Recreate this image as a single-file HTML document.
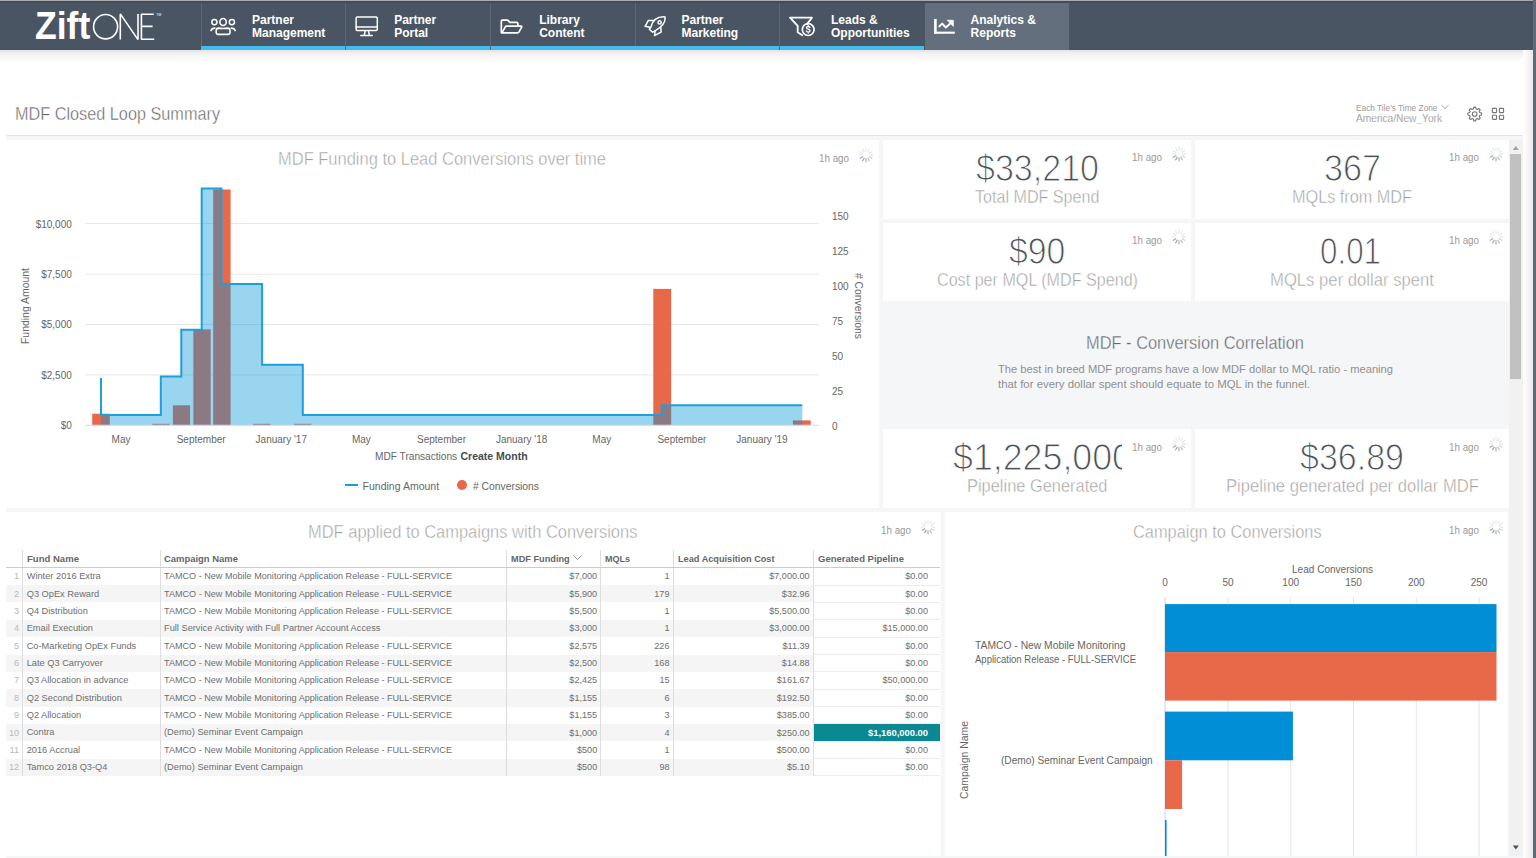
<!DOCTYPE html>
<html><head><meta charset="utf-8"><title>MDF Closed Loop Summary</title>
<style>
html,body{margin:0;padding:0;}
body{width:1536px;height:858px;overflow:hidden;position:relative;background:#fff;font-family:"Liberation Sans",sans-serif;}
.r{position:absolute;}
.t{position:absolute;white-space:nowrap;line-height:1;transform-origin:0 0;}
svg text{font-family:"Liberation Sans",sans-serif;}
</style></head><body>
<div class="r" style="left:0.00px;top:0.00px;width:1536.00px;height:1.00px;background:#abaaae;"></div>
<div class="r" style="left:0.00px;top:1.00px;width:1536.00px;height:49.40px;background:#4a5563;"></div>
<div class="r" style="left:0.00px;top:1.00px;width:1536.00px;height:1.50px;background:#434d59;"></div>
<span class="t" style="left:34.50px;top:7.24px;font-size:38.70px;color:#ffffff;font-weight:bold;transform:scaleX(0.9191);">Zift</span>
<svg class="r" style="left:0;top:0" width="200" height="50" viewBox="0 0 200 50">
<g fill="none" stroke="#fff" stroke-width="1.6" stroke-linejoin="bevel">
<ellipse cx="105.6" cy="26.7" rx="12" ry="12.2"/>
<path d="M120.3 39.6V13.9L138 39.6V13.9"/>
<path d="M153.8 14.2H141.4V39.2H154.2M141.4 26.4H152.6"/>
</g>
<text x="156.5" y="15.5" font-size="3.2" fill="#fff" font-family="Liberation Sans">TM</text>
</svg>
<div class="r" style="left:200.50px;top:3.00px;width:1.00px;height:47.40px;background:#5c6876;"></div>
<div class="r" style="left:201.30px;top:46.20px;width:144.40px;height:4.20px;background:#40bcee;"></div>
<span class="t" style="left:252.00px;top:14.14px;font-size:12.00px;color:#ffffff;font-weight:bold;">Partner</span>
<span class="t" style="left:252.00px;top:27.14px;font-size:12.00px;color:#ffffff;font-weight:bold;">Management</span>
<div class="r" style="left:345.20px;top:3.00px;width:1.00px;height:47.40px;background:#5c6876;"></div>
<div class="r" style="left:346.00px;top:46.20px;width:144.40px;height:4.20px;background:#40bcee;"></div>
<span class="t" style="left:394.20px;top:14.14px;font-size:12.00px;color:#ffffff;font-weight:bold;">Partner</span>
<span class="t" style="left:394.20px;top:27.14px;font-size:12.00px;color:#ffffff;font-weight:bold;">Portal</span>
<div class="r" style="left:489.90px;top:3.00px;width:1.00px;height:47.40px;background:#5c6876;"></div>
<div class="r" style="left:490.70px;top:46.20px;width:144.40px;height:4.20px;background:#40bcee;"></div>
<span class="t" style="left:539.20px;top:14.14px;font-size:12.00px;color:#ffffff;font-weight:bold;">Library</span>
<span class="t" style="left:539.20px;top:27.14px;font-size:12.00px;color:#ffffff;font-weight:bold;">Content</span>
<div class="r" style="left:634.60px;top:3.00px;width:1.00px;height:47.40px;background:#5c6876;"></div>
<div class="r" style="left:635.40px;top:46.20px;width:144.40px;height:4.20px;background:#40bcee;"></div>
<span class="t" style="left:681.50px;top:14.14px;font-size:12.00px;color:#ffffff;font-weight:bold;">Partner</span>
<span class="t" style="left:681.50px;top:27.14px;font-size:12.00px;color:#ffffff;font-weight:bold;">Marketing</span>
<div class="r" style="left:779.30px;top:3.00px;width:1.00px;height:47.40px;background:#5c6876;"></div>
<div class="r" style="left:780.10px;top:46.20px;width:144.40px;height:4.20px;background:#40bcee;"></div>
<span class="t" style="left:831.00px;top:14.14px;font-size:12.00px;color:#ffffff;font-weight:bold;">Leads &amp;</span>
<span class="t" style="left:831.00px;top:27.14px;font-size:12.00px;color:#ffffff;font-weight:bold;">Opportunities</span>
<div class="r" style="left:924.50px;top:3.00px;width:144.50px;height:47.40px;background:#646f7d;"></div>
<span class="t" style="left:970.60px;top:14.14px;font-size:12.00px;color:#ffffff;font-weight:bold;">Analytics &amp;</span>
<span class="t" style="left:970.60px;top:27.14px;font-size:12.00px;color:#ffffff;font-weight:bold;">Reports</span>
<svg class="r" style="left:0;top:0" width="1100" height="50" viewBox="0 0 1100 50">
<g fill="none" stroke="#fff" stroke-width="1.5" stroke-linecap="round" stroke-linejoin="round">
<!-- people -->
<ellipse cx="223.1" cy="22" rx="3.2" ry="3.5" stroke-width="1.6"/>
<circle cx="214.4" cy="22.1" r="2.6" stroke-width="1.5"/>
<circle cx="231.9" cy="22.1" r="2.6" stroke-width="1.5"/>
<path d="M217.9 34.4Q216.2 34.4 216.2 32.8V30.6Q216.2 28.1 218.8 28.1Q223.1 29 227.4 28.1Q230 28.1 230 30.6V32.8Q230 34.4 228.3 34.4z" stroke-width="1.6"/>
<path d="M211 30.6Q211.8 28.2 214.8 28.1M235.2 30.6Q234.4 28.2 231.4 28.1" stroke-width="1.6"/>
<!-- monitor -->
<rect x="356.1" y="17" width="21.2" height="13.6" rx="1.3"/>
<path d="M356.1 27.1h21.2M360.8 35.4h11.4M365.1 31.2l-0.8 4M368.5 31.2l0.8 4"/>
<!-- folder -->
<path d="M501.3 32.4V21.3Q501.3 20.1 502.5 20.1H507.7L509.9 22.4H516.6Q517.9 22.4 517.9 23.7V25.9" stroke-width="1.7"/>
<path d="M501.9 32.9L505.3 26.9Q505.7 26.2 506.6 26.2H521Q522.1 26.2 521.6 27.2L518.9 32.2Q518.5 32.9 517.6 32.9z" stroke-width="1.7"/>
<!-- rocket -->
<path d="M665.1 16.9C657.5 16.4 652.5 20.5 650.8 27.2L649.3 29.2L652.6 32.2L655 30.9C661.2 27.4 665.8 22.8 665.1 16.9z"/>
<circle cx="659.6" cy="22.4" r="1.6"/>
<path d="M653.2 20.4H648.4L645.1 26.3L649.9 27.3M660.9 27.8L661.1 32.2L654.5 35.5L655.1 31.1"/>
<!-- funnel -->
<path d="M790 17.7h22l-5.1 6.4M797.7 25.9v6.3l4.6 3.1M790 17.7l7.7 8.2" stroke-width="1.8"/>
<circle cx="808.2" cy="29.6" r="5.9" stroke-width="1.7"/>
<path d="M809.9 27.5c-0.3-0.7-0.9-1-1.7-1-1 0-1.7 0.5-1.7 1.3 0 1.8 3.5 1 3.5 2.9 0 0.8-0.7 1.4-1.8 1.4-0.9 0-1.5-0.4-1.8-1.1M808.2 25.5v1M808.2 31.9v1.2" stroke-width="1.3"/>
<!-- analytics -->
<path d="M935.4 19V33.7" stroke-linecap="butt" stroke-width="2.6"/>
<path d="M934.1 32.7H954.8" stroke-linecap="butt" stroke-width="2.1"/>
<path d="M939.3 26.4L942.2 23.6L945.8 27.5L950.6 23.2" stroke-width="2"/>
<path d="M947.6 20.3H953.3V26z" fill="#fff" stroke-width="0.8"/>
</g></svg>
<div class="r" style="left:0.00px;top:50.40px;width:1533.00px;height:12.00px;background:linear-gradient(#e4e4e4,#f3f3f3 35%,#ffffff);"></div>
<span class="t" style="left:15.00px;top:105.26px;font-size:18.00px;color:#626262;transform:scaleX(0.9028);-webkit-text-stroke:0.4px #fff;">MDF Closed Loop Summary</span>
<span class="t" style="left:1356.00px;top:103.60px;font-size:8.50px;color:#9a9a9a;transform:scaleX(0.9777);">Each Tile's Time Zone</span>
<svg class="r" style="left:1440px;top:102px" width="10" height="10" viewBox="0 0 10 10"><path d="M1.5 3.2l3.5 3.5 3.5-3.5" fill="none" stroke="#9a9a9a" stroke-width="0.9"/></svg>
<span class="t" style="left:1356.00px;top:112.71px;font-size:10.50px;color:#7a7a7a;transform:scaleX(0.9674);-webkit-text-stroke:0.25px #fff;">America/New_York</span>
<svg class="r" style="left:1460px;top:100px" width="60" height="28" viewBox="0 0 60 28">
<g fill="none" stroke="#777" stroke-width="1.1">
<polygon points="13.27,9.00 13.74,7.17 15.66,7.17 16.13,9.00 17.22,9.45 18.85,8.49 20.21,9.85 19.25,11.48 19.70,12.57 21.53,13.04 21.53,14.96 19.70,15.43 19.25,16.52 20.21,18.15 18.85,19.51 17.22,18.55 16.13,19.00 15.66,20.83 13.74,20.83 13.27,19.00 12.18,18.55 10.55,19.51 9.19,18.15 10.15,16.52 9.70,15.43 7.87,14.96 7.87,13.04 9.70,12.57 10.15,11.48 9.19,9.85 10.55,8.49 12.18,9.45" stroke-linejoin="round"/>
<circle cx="14.7" cy="14.0" r="2.3"/>
<rect x="32.4" y="8.4" width="4.2" height="4.2" rx="0.6"/>
<rect x="39.4" y="8.4" width="4.2" height="4.2" rx="0.6"/>
<rect x="32.4" y="15.2" width="4.2" height="4.2" rx="0.6"/>
<rect x="39.4" y="15.2" width="4.2" height="4.2" rx="0.6"/>
</g></svg>
<div class="r" style="left:6.00px;top:135.00px;width:1516.50px;height:1.00px;background:#e2e5e9;"></div>
<div class="r" style="left:6.00px;top:136.00px;width:1516.50px;height:722.00px;background:#f5f6f8;"></div>
<div class="r" style="left:6.00px;top:140.00px;width:873.00px;height:368.00px;background:#ffffff;"></div>
<div class="r" style="left:883.00px;top:140.00px;width:308.00px;height:78.50px;background:#ffffff;"></div>
<div class="r" style="left:1195.00px;top:140.00px;width:313.50px;height:78.50px;background:#ffffff;"></div>
<div class="r" style="left:883.00px;top:223.00px;width:308.00px;height:78.00px;background:#ffffff;"></div>
<div class="r" style="left:1195.00px;top:223.00px;width:313.50px;height:78.00px;background:#ffffff;"></div>
<div class="r" style="left:883.00px;top:429.00px;width:308.00px;height:79.00px;background:#ffffff;"></div>
<div class="r" style="left:1195.00px;top:429.00px;width:313.50px;height:79.00px;background:#ffffff;"></div>
<div class="r" style="left:6.00px;top:512.00px;width:935.00px;height:344.00px;background:#ffffff;"></div>
<div class="r" style="left:945.00px;top:512.00px;width:563.00px;height:344.00px;background:#ffffff;"></div>
<span class="t" style="left:819.00px;top:153.01px;font-size:10.50px;color:#9a9a9a;transform:scaleX(0.9341);">1h ago</span>
<svg class="r" style="left:857.60px;top:147.00px" width="16" height="16" viewBox="0 0 16 16"><g stroke="#76858b" stroke-width="1.1" stroke-linecap="butt"><line x1="8.00" y1="4.80" x2="8.00" y2="0.80" stroke-opacity="0.20"/><line x1="9.60" y1="5.23" x2="11.60" y2="1.76" stroke-opacity="0.20"/><line x1="10.77" y1="6.40" x2="14.24" y2="4.40" stroke-opacity="0.22"/><line x1="11.20" y1="8.00" x2="15.20" y2="8.00" stroke-opacity="0.25"/><line x1="10.77" y1="9.60" x2="14.24" y2="11.60" stroke-opacity="0.38"/><line x1="9.60" y1="10.77" x2="11.60" y2="14.24" stroke-opacity="0.55"/><line x1="8.00" y1="11.20" x2="8.00" y2="15.20" stroke-opacity="0.70"/><line x1="6.40" y1="10.77" x2="4.40" y2="14.24" stroke-opacity="0.78"/><line x1="5.23" y1="9.60" x2="1.76" y2="11.60" stroke-opacity="0.72"/><line x1="4.80" y1="8.00" x2="0.80" y2="8.00" stroke-opacity="0.20"/><line x1="5.23" y1="6.40" x2="1.76" y2="4.40" stroke-opacity="0.20"/><line x1="6.40" y1="5.23" x2="4.40" y2="1.76" stroke-opacity="0.20"/></g></svg>
<span class="t" style="left:1132.00px;top:152.31px;font-size:10.50px;color:#9a9a9a;transform:scaleX(0.9341);">1h ago</span>
<svg class="r" style="left:1170.60px;top:146.30px" width="16" height="16" viewBox="0 0 16 16"><g stroke="#76858b" stroke-width="1.1" stroke-linecap="butt"><line x1="8.00" y1="4.80" x2="8.00" y2="0.80" stroke-opacity="0.20"/><line x1="9.60" y1="5.23" x2="11.60" y2="1.76" stroke-opacity="0.20"/><line x1="10.77" y1="6.40" x2="14.24" y2="4.40" stroke-opacity="0.22"/><line x1="11.20" y1="8.00" x2="15.20" y2="8.00" stroke-opacity="0.25"/><line x1="10.77" y1="9.60" x2="14.24" y2="11.60" stroke-opacity="0.38"/><line x1="9.60" y1="10.77" x2="11.60" y2="14.24" stroke-opacity="0.55"/><line x1="8.00" y1="11.20" x2="8.00" y2="15.20" stroke-opacity="0.70"/><line x1="6.40" y1="10.77" x2="4.40" y2="14.24" stroke-opacity="0.78"/><line x1="5.23" y1="9.60" x2="1.76" y2="11.60" stroke-opacity="0.72"/><line x1="4.80" y1="8.00" x2="0.80" y2="8.00" stroke-opacity="0.20"/><line x1="5.23" y1="6.40" x2="1.76" y2="4.40" stroke-opacity="0.20"/><line x1="6.40" y1="5.23" x2="4.40" y2="1.76" stroke-opacity="0.20"/></g></svg>
<span class="t" style="left:1449.40px;top:152.21px;font-size:10.50px;color:#9a9a9a;transform:scaleX(0.9341);">1h ago</span>
<svg class="r" style="left:1488.30px;top:146.20px" width="16" height="16" viewBox="0 0 16 16"><g stroke="#76858b" stroke-width="1.1" stroke-linecap="butt"><line x1="8.00" y1="4.80" x2="8.00" y2="0.80" stroke-opacity="0.20"/><line x1="9.60" y1="5.23" x2="11.60" y2="1.76" stroke-opacity="0.20"/><line x1="10.77" y1="6.40" x2="14.24" y2="4.40" stroke-opacity="0.22"/><line x1="11.20" y1="8.00" x2="15.20" y2="8.00" stroke-opacity="0.25"/><line x1="10.77" y1="9.60" x2="14.24" y2="11.60" stroke-opacity="0.38"/><line x1="9.60" y1="10.77" x2="11.60" y2="14.24" stroke-opacity="0.55"/><line x1="8.00" y1="11.20" x2="8.00" y2="15.20" stroke-opacity="0.70"/><line x1="6.40" y1="10.77" x2="4.40" y2="14.24" stroke-opacity="0.78"/><line x1="5.23" y1="9.60" x2="1.76" y2="11.60" stroke-opacity="0.72"/><line x1="4.80" y1="8.00" x2="0.80" y2="8.00" stroke-opacity="0.20"/><line x1="5.23" y1="6.40" x2="1.76" y2="4.40" stroke-opacity="0.20"/><line x1="6.40" y1="5.23" x2="4.40" y2="1.76" stroke-opacity="0.20"/></g></svg>
<span class="t" style="left:1132.00px;top:235.31px;font-size:10.50px;color:#9a9a9a;transform:scaleX(0.9341);">1h ago</span>
<svg class="r" style="left:1170.60px;top:229.30px" width="16" height="16" viewBox="0 0 16 16"><g stroke="#76858b" stroke-width="1.1" stroke-linecap="butt"><line x1="8.00" y1="4.80" x2="8.00" y2="0.80" stroke-opacity="0.20"/><line x1="9.60" y1="5.23" x2="11.60" y2="1.76" stroke-opacity="0.20"/><line x1="10.77" y1="6.40" x2="14.24" y2="4.40" stroke-opacity="0.22"/><line x1="11.20" y1="8.00" x2="15.20" y2="8.00" stroke-opacity="0.25"/><line x1="10.77" y1="9.60" x2="14.24" y2="11.60" stroke-opacity="0.38"/><line x1="9.60" y1="10.77" x2="11.60" y2="14.24" stroke-opacity="0.55"/><line x1="8.00" y1="11.20" x2="8.00" y2="15.20" stroke-opacity="0.70"/><line x1="6.40" y1="10.77" x2="4.40" y2="14.24" stroke-opacity="0.78"/><line x1="5.23" y1="9.60" x2="1.76" y2="11.60" stroke-opacity="0.72"/><line x1="4.80" y1="8.00" x2="0.80" y2="8.00" stroke-opacity="0.20"/><line x1="5.23" y1="6.40" x2="1.76" y2="4.40" stroke-opacity="0.20"/><line x1="6.40" y1="5.23" x2="4.40" y2="1.76" stroke-opacity="0.20"/></g></svg>
<span class="t" style="left:1449.40px;top:235.21px;font-size:10.50px;color:#9a9a9a;transform:scaleX(0.9341);">1h ago</span>
<svg class="r" style="left:1488.30px;top:229.20px" width="16" height="16" viewBox="0 0 16 16"><g stroke="#76858b" stroke-width="1.1" stroke-linecap="butt"><line x1="8.00" y1="4.80" x2="8.00" y2="0.80" stroke-opacity="0.20"/><line x1="9.60" y1="5.23" x2="11.60" y2="1.76" stroke-opacity="0.20"/><line x1="10.77" y1="6.40" x2="14.24" y2="4.40" stroke-opacity="0.22"/><line x1="11.20" y1="8.00" x2="15.20" y2="8.00" stroke-opacity="0.25"/><line x1="10.77" y1="9.60" x2="14.24" y2="11.60" stroke-opacity="0.38"/><line x1="9.60" y1="10.77" x2="11.60" y2="14.24" stroke-opacity="0.55"/><line x1="8.00" y1="11.20" x2="8.00" y2="15.20" stroke-opacity="0.70"/><line x1="6.40" y1="10.77" x2="4.40" y2="14.24" stroke-opacity="0.78"/><line x1="5.23" y1="9.60" x2="1.76" y2="11.60" stroke-opacity="0.72"/><line x1="4.80" y1="8.00" x2="0.80" y2="8.00" stroke-opacity="0.20"/><line x1="5.23" y1="6.40" x2="1.76" y2="4.40" stroke-opacity="0.20"/><line x1="6.40" y1="5.23" x2="4.40" y2="1.76" stroke-opacity="0.20"/></g></svg>
<span class="t" style="left:1132.00px;top:441.91px;font-size:10.50px;color:#9a9a9a;transform:scaleX(0.9341);">1h ago</span>
<svg class="r" style="left:1170.70px;top:435.90px" width="16" height="16" viewBox="0 0 16 16"><g stroke="#76858b" stroke-width="1.1" stroke-linecap="butt"><line x1="8.00" y1="4.80" x2="8.00" y2="0.80" stroke-opacity="0.20"/><line x1="9.60" y1="5.23" x2="11.60" y2="1.76" stroke-opacity="0.20"/><line x1="10.77" y1="6.40" x2="14.24" y2="4.40" stroke-opacity="0.22"/><line x1="11.20" y1="8.00" x2="15.20" y2="8.00" stroke-opacity="0.25"/><line x1="10.77" y1="9.60" x2="14.24" y2="11.60" stroke-opacity="0.38"/><line x1="9.60" y1="10.77" x2="11.60" y2="14.24" stroke-opacity="0.55"/><line x1="8.00" y1="11.20" x2="8.00" y2="15.20" stroke-opacity="0.70"/><line x1="6.40" y1="10.77" x2="4.40" y2="14.24" stroke-opacity="0.78"/><line x1="5.23" y1="9.60" x2="1.76" y2="11.60" stroke-opacity="0.72"/><line x1="4.80" y1="8.00" x2="0.80" y2="8.00" stroke-opacity="0.20"/><line x1="5.23" y1="6.40" x2="1.76" y2="4.40" stroke-opacity="0.20"/><line x1="6.40" y1="5.23" x2="4.40" y2="1.76" stroke-opacity="0.20"/></g></svg>
<span class="t" style="left:1448.80px;top:441.91px;font-size:10.50px;color:#9a9a9a;transform:scaleX(0.9341);">1h ago</span>
<svg class="r" style="left:1487.80px;top:435.90px" width="16" height="16" viewBox="0 0 16 16"><g stroke="#76858b" stroke-width="1.1" stroke-linecap="butt"><line x1="8.00" y1="4.80" x2="8.00" y2="0.80" stroke-opacity="0.20"/><line x1="9.60" y1="5.23" x2="11.60" y2="1.76" stroke-opacity="0.20"/><line x1="10.77" y1="6.40" x2="14.24" y2="4.40" stroke-opacity="0.22"/><line x1="11.20" y1="8.00" x2="15.20" y2="8.00" stroke-opacity="0.25"/><line x1="10.77" y1="9.60" x2="14.24" y2="11.60" stroke-opacity="0.38"/><line x1="9.60" y1="10.77" x2="11.60" y2="14.24" stroke-opacity="0.55"/><line x1="8.00" y1="11.20" x2="8.00" y2="15.20" stroke-opacity="0.70"/><line x1="6.40" y1="10.77" x2="4.40" y2="14.24" stroke-opacity="0.78"/><line x1="5.23" y1="9.60" x2="1.76" y2="11.60" stroke-opacity="0.72"/><line x1="4.80" y1="8.00" x2="0.80" y2="8.00" stroke-opacity="0.20"/><line x1="5.23" y1="6.40" x2="1.76" y2="4.40" stroke-opacity="0.20"/><line x1="6.40" y1="5.23" x2="4.40" y2="1.76" stroke-opacity="0.20"/></g></svg>
<span class="t" style="left:881.00px;top:525.21px;font-size:10.50px;color:#9a9a9a;transform:scaleX(0.9341);">1h ago</span>
<svg class="r" style="left:920.40px;top:519.20px" width="16" height="16" viewBox="0 0 16 16"><g stroke="#76858b" stroke-width="1.1" stroke-linecap="butt"><line x1="8.00" y1="4.80" x2="8.00" y2="0.80" stroke-opacity="0.20"/><line x1="9.60" y1="5.23" x2="11.60" y2="1.76" stroke-opacity="0.20"/><line x1="10.77" y1="6.40" x2="14.24" y2="4.40" stroke-opacity="0.22"/><line x1="11.20" y1="8.00" x2="15.20" y2="8.00" stroke-opacity="0.25"/><line x1="10.77" y1="9.60" x2="14.24" y2="11.60" stroke-opacity="0.38"/><line x1="9.60" y1="10.77" x2="11.60" y2="14.24" stroke-opacity="0.55"/><line x1="8.00" y1="11.20" x2="8.00" y2="15.20" stroke-opacity="0.70"/><line x1="6.40" y1="10.77" x2="4.40" y2="14.24" stroke-opacity="0.78"/><line x1="5.23" y1="9.60" x2="1.76" y2="11.60" stroke-opacity="0.72"/><line x1="4.80" y1="8.00" x2="0.80" y2="8.00" stroke-opacity="0.20"/><line x1="5.23" y1="6.40" x2="1.76" y2="4.40" stroke-opacity="0.20"/><line x1="6.40" y1="5.23" x2="4.40" y2="1.76" stroke-opacity="0.20"/></g></svg>
<span class="t" style="left:1449.00px;top:525.01px;font-size:10.50px;color:#9a9a9a;transform:scaleX(0.9341);">1h ago</span>
<svg class="r" style="left:1487.70px;top:519.00px" width="16" height="16" viewBox="0 0 16 16"><g stroke="#76858b" stroke-width="1.1" stroke-linecap="butt"><line x1="8.00" y1="4.80" x2="8.00" y2="0.80" stroke-opacity="0.20"/><line x1="9.60" y1="5.23" x2="11.60" y2="1.76" stroke-opacity="0.20"/><line x1="10.77" y1="6.40" x2="14.24" y2="4.40" stroke-opacity="0.22"/><line x1="11.20" y1="8.00" x2="15.20" y2="8.00" stroke-opacity="0.25"/><line x1="10.77" y1="9.60" x2="14.24" y2="11.60" stroke-opacity="0.38"/><line x1="9.60" y1="10.77" x2="11.60" y2="14.24" stroke-opacity="0.55"/><line x1="8.00" y1="11.20" x2="8.00" y2="15.20" stroke-opacity="0.70"/><line x1="6.40" y1="10.77" x2="4.40" y2="14.24" stroke-opacity="0.78"/><line x1="5.23" y1="9.60" x2="1.76" y2="11.60" stroke-opacity="0.72"/><line x1="4.80" y1="8.00" x2="0.80" y2="8.00" stroke-opacity="0.20"/><line x1="5.23" y1="6.40" x2="1.76" y2="4.40" stroke-opacity="0.20"/><line x1="6.40" y1="5.23" x2="4.40" y2="1.76" stroke-opacity="0.20"/></g></svg>
<span class="t" style="left:975.70px;top:149.88px;font-size:37.00px;color:#4a5157;transform:scaleX(0.9196);-webkit-text-stroke:1.0px #fff;">$33,210</span>
<span class="t" style="left:974.80px;top:187.76px;font-size:18.00px;color:#9e9e9e;transform:scaleX(0.8946);-webkit-text-stroke:0.45px #fff;">Total MDF Spend</span>
<span class="t" style="left:1009.00px;top:232.68px;font-size:37.00px;color:#4a5157;transform:scaleX(0.9136);-webkit-text-stroke:1.0px #fff;">$90</span>
<span class="t" style="left:936.80px;top:271.36px;font-size:18.00px;color:#9e9e9e;transform:scaleX(0.8957);-webkit-text-stroke:0.45px #fff;">Cost per MQL (MDF Spend)</span>
<span class="t" style="left:1323.50px;top:149.58px;font-size:37.00px;color:#4a5157;transform:scaleX(0.9233);-webkit-text-stroke:1.0px #fff;">367</span>
<span class="t" style="left:1292.30px;top:187.76px;font-size:18.00px;color:#9e9e9e;transform:scaleX(0.9023);-webkit-text-stroke:0.45px #fff;">MQLs from MDF</span>
<span class="t" style="left:1319.60px;top:232.58px;font-size:37.00px;color:#4a5157;transform:scaleX(0.8471);-webkit-text-stroke:1.0px #fff;">0.01</span>
<span class="t" style="left:1270.10px;top:270.86px;font-size:18.00px;color:#9e9e9e;transform:scaleX(0.9261);-webkit-text-stroke:0.45px #fff;">MQLs per dollar spent</span>
<div class="r" style="left:883px;top:429px;width:239px;height:50px;overflow:hidden"><span class="t" style="left:69.70px;top:10.08px;font-size:37.00px;color:#4a5157;transform:scaleX(0.9666);-webkit-text-stroke:1.0px #fff;">$1,225,000</span></div>
<span class="t" style="left:966.70px;top:476.56px;font-size:18.00px;color:#9e9e9e;transform:scaleX(0.9117);-webkit-text-stroke:0.45px #fff;">Pipeline Generated</span>
<span class="t" style="left:1300.00px;top:439.08px;font-size:37.00px;color:#4a5157;transform:scaleX(0.9190);-webkit-text-stroke:1.0px #fff;">$36.89</span>
<span class="t" style="left:1225.70px;top:476.56px;font-size:18.00px;color:#9e9e9e;transform:scaleX(0.9228);-webkit-text-stroke:0.45px #fff;">Pipeline generated per dollar MDF</span>
<span class="t" style="left:1086.30px;top:333.76px;font-size:18.00px;color:#64686c;transform:scaleX(0.9118);-webkit-text-stroke:0.35px #f5f6f8;">MDF - Conversion Correlation</span>
<span class="t" style="left:997.70px;top:363.59px;font-size:11.00px;color:#8f8f8f;transform:scaleX(1.0137);">The best in breed MDF programs have a low MDF dollar to MQL ratio - meaning</span>
<span class="t" style="left:997.70px;top:378.59px;font-size:11.00px;color:#8f8f8f;transform:scaleX(1.0363);">that for every dollar spent should equate to MQL in the funnel.</span>
<span class="t" style="left:278.00px;top:150.06px;font-size:18.00px;color:#9e9e9e;transform:scaleX(0.9158);-webkit-text-stroke:0.45px #fff;">MDF Funding to Lead Conversions over time</span>
<svg class="r" style="left:0;top:0" width="880" height="510" viewBox="0 0 880 510"><rect x="85" y="223.10" width="734" height="1" fill="#e6e6e6"/><rect x="85" y="273.70" width="734" height="1" fill="#e6e6e6"/><rect x="85" y="324.00" width="734" height="1" fill="#e6e6e6"/><rect x="85" y="374.40" width="734" height="1" fill="#e6e6e6"/><rect x="92.20" y="413.70" width="17.60" height="11.50" fill="#e8684a"/><rect x="152.40" y="423.80" width="17.40" height="1.40" fill="#e8684a"/><rect x="172.90" y="405.30" width="17.20" height="19.90" fill="#e8684a"/><rect x="193.30" y="329.40" width="17.40" height="95.80" fill="#e8684a"/><rect x="213.20" y="189.50" width="17.40" height="235.70" fill="#e8684a"/><rect x="253.00" y="423.80" width="17.50" height="1.40" fill="#e8684a"/><rect x="294.00" y="423.80" width="17.40" height="1.40" fill="#e8684a"/><rect x="653.30" y="288.90" width="17.90" height="136.30" fill="#e8684a"/><rect x="792.90" y="420.40" width="17.80" height="4.80" fill="#e8684a"/><polygon points="101.0,415.0 160.8,415.0 160.8,376.4 181.3,376.4 181.3,329.8 201.7,329.8 201.7,188.4 221.4,188.4 221.4,284.0 262.1,284.0 262.1,364.8 302.8,364.8 302.8,415.0 661.7,415.0 661.7,405.3 802.3,405.3 802.3,425.2 101,425.2" fill="#0096d5" fill-opacity="0.40"/><polyline points="101.0,378.0 101.0,415.0 160.8,415.0 160.8,376.4 181.3,376.4 181.3,329.8 201.7,329.8 201.7,188.4 221.4,188.4 221.4,284.0 262.1,284.0 262.1,364.8 302.8,364.8 302.8,415.0 661.7,415.0 661.7,405.3 802.3,405.3" fill="none" stroke="#1e9edb" stroke-width="2" stroke-linejoin="miter"/><rect x="85" y="424.7" width="734" height="1" fill="#ccd6eb"/></svg>
<span class="t" style="left:35.65px;top:219.84px;font-size:10.00px;color:#666666;">$10,000</span>
<span class="t" style="left:41.21px;top:270.04px;font-size:10.00px;color:#666666;">$7,500</span>
<span class="t" style="left:41.21px;top:320.14px;font-size:10.00px;color:#666666;">$5,000</span>
<span class="t" style="left:41.21px;top:371.04px;font-size:10.00px;color:#666666;">$2,500</span>
<span class="t" style="left:60.68px;top:421.34px;font-size:10.00px;color:#666666;">$0</span>
<span class="t" style="left:832.00px;top:212.13px;font-size:10.00px;color:#666666;">150</span>
<span class="t" style="left:832.00px;top:247.13px;font-size:10.00px;color:#666666;">125</span>
<span class="t" style="left:832.00px;top:282.14px;font-size:10.00px;color:#666666;">100</span>
<span class="t" style="left:832.00px;top:317.14px;font-size:10.00px;color:#666666;">75</span>
<span class="t" style="left:832.00px;top:352.14px;font-size:10.00px;color:#666666;">50</span>
<span class="t" style="left:832.00px;top:387.14px;font-size:10.00px;color:#666666;">25</span>
<span class="t" style="left:832.00px;top:422.14px;font-size:10.00px;color:#666666;">0</span>
<span class="t" style="left:111.58px;top:435.14px;font-size:10.00px;color:#666666;">May</span>
<span class="t" style="left:176.69px;top:435.14px;font-size:10.00px;color:#666666;">September</span>
<span class="t" style="left:255.58px;top:435.14px;font-size:10.00px;color:#666666;">January '17</span>
<span class="t" style="left:351.94px;top:435.14px;font-size:10.00px;color:#666666;">May</span>
<span class="t" style="left:417.05px;top:435.14px;font-size:10.00px;color:#666666;">September</span>
<span class="t" style="left:495.94px;top:435.14px;font-size:10.00px;color:#666666;">January '18</span>
<span class="t" style="left:592.30px;top:435.14px;font-size:10.00px;color:#666666;">May</span>
<span class="t" style="left:657.41px;top:435.14px;font-size:10.00px;color:#666666;">September</span>
<span class="t" style="left:736.30px;top:435.14px;font-size:10.00px;color:#666666;">January '19</span>
<div class="r" style="left:29.2px;top:306px;width:0;height:0"><div style="position:absolute;left:0;top:0;transform:rotate(-90deg);transform-origin:0 0"><span class="t" style="left:-38.00px;top:-8.89px;font-size:10.50px;color:#666666;transform:scaleX(0.9938);">Funding Amount</span></div></div>
<div class="r" style="left:855.2px;top:306px;width:0;height:0"><div style="position:absolute;left:0;top:0;transform:rotate(90deg);transform-origin:0 0"><span class="t" style="left:-33.00px;top:-8.89px;font-size:10.50px;color:#666666;transform:scaleX(0.9833);"># Conversions</span></div></div>
<span class="t" style="left:375.30px;top:451.41px;font-size:10.50px;color:#666666;transform:scaleX(0.9647);">MDF Transactions </span>
<span class="t" style="left:460.50px;top:451.41px;font-size:10.50px;color:#444a50;font-weight:bold;">Create Month</span>
<div class="r" style="left:345.00px;top:484.00px;width:13.00px;height:2.00px;background:#1e9edb;"></div>
<span class="t" style="left:362.60px;top:480.51px;font-size:10.50px;color:#666666;">Funding Amount</span>
<div class="r" style="left:457px;top:480px;width:10px;height:10px;border-radius:50%;background:#e8684a"></div>
<span class="t" style="left:473.00px;top:480.51px;font-size:10.50px;color:#666666;transform:scaleX(0.9833);"># Conversions</span>
<span class="t" style="left:308.40px;top:523.06px;font-size:18.00px;color:#9e9e9e;transform:scaleX(0.9146);-webkit-text-stroke:0.45px #fff;">MDF applied to Campaigns with Conversions</span>
<span class="t" style="left:13.94px;top:572.35px;font-size:9.10px;color:#b8b8b8;">1</span>
<span class="t" style="left:26.70px;top:572.22px;font-size:9.25px;color:#6e6e6e;">Winter 2016 Extra</span>
<span class="t" style="left:164.00px;top:572.22px;font-size:9.25px;color:#6e6e6e;transform:scaleX(0.9822);">TAMCO - New Mobile Monitoring Application Release - FULL-SERVICE</span>
<span class="t" style="left:569.37px;top:572.35px;font-size:9.10px;color:#6e6e6e;">$7,000</span>
<span class="t" style="left:664.44px;top:572.35px;font-size:9.10px;color:#6e6e6e;">1</span>
<span class="t" style="left:769.22px;top:572.35px;font-size:9.10px;color:#6e6e6e;">$7,000.00</span>
<span class="t" style="left:905.23px;top:572.35px;font-size:9.10px;color:#6e6e6e;">$0.00</span>
<div class="r" style="left:6.00px;top:585.10px;width:807.60px;height:17.35px;background:#f5f5f5;"></div>
<div class="r" style="left:813.60px;top:584.60px;width:126.70px;height:1.00px;background:#ececec;"></div>
<span class="t" style="left:13.94px;top:589.70px;font-size:9.10px;color:#b8b8b8;">2</span>
<span class="t" style="left:26.70px;top:589.57px;font-size:9.25px;color:#6e6e6e;">Q3 OpEx Reward</span>
<span class="t" style="left:164.00px;top:589.57px;font-size:9.25px;color:#6e6e6e;transform:scaleX(0.9822);">TAMCO - New Mobile Monitoring Application Release - FULL-SERVICE</span>
<span class="t" style="left:569.37px;top:589.70px;font-size:9.10px;color:#6e6e6e;">$5,900</span>
<span class="t" style="left:654.32px;top:589.70px;font-size:9.10px;color:#6e6e6e;">179</span>
<span class="t" style="left:781.87px;top:589.70px;font-size:9.10px;color:#6e6e6e;">$32.96</span>
<span class="t" style="left:905.23px;top:589.70px;font-size:9.10px;color:#6e6e6e;">$0.00</span>
<div class="r" style="left:813.60px;top:601.95px;width:126.70px;height:1.00px;background:#ececec;"></div>
<span class="t" style="left:13.94px;top:607.05px;font-size:9.10px;color:#b8b8b8;">3</span>
<span class="t" style="left:26.70px;top:606.92px;font-size:9.25px;color:#6e6e6e;">Q4 Distribution</span>
<span class="t" style="left:164.00px;top:606.92px;font-size:9.25px;color:#6e6e6e;transform:scaleX(0.9822);">TAMCO - New Mobile Monitoring Application Release - FULL-SERVICE</span>
<span class="t" style="left:569.37px;top:607.05px;font-size:9.10px;color:#6e6e6e;">$5,500</span>
<span class="t" style="left:664.44px;top:607.05px;font-size:9.10px;color:#6e6e6e;">1</span>
<span class="t" style="left:769.22px;top:607.05px;font-size:9.10px;color:#6e6e6e;">$5,500.00</span>
<span class="t" style="left:905.23px;top:607.05px;font-size:9.10px;color:#6e6e6e;">$0.00</span>
<div class="r" style="left:6.00px;top:619.80px;width:807.60px;height:17.35px;background:#f5f5f5;"></div>
<div class="r" style="left:813.60px;top:619.30px;width:126.70px;height:1.00px;background:#ececec;"></div>
<span class="t" style="left:13.94px;top:624.40px;font-size:9.10px;color:#b8b8b8;">4</span>
<span class="t" style="left:26.70px;top:624.27px;font-size:9.25px;color:#6e6e6e;">Email Execution</span>
<span class="t" style="left:164.00px;top:624.27px;font-size:9.25px;color:#6e6e6e;">Full Service Activity with Full Partner Account Access</span>
<span class="t" style="left:569.37px;top:624.40px;font-size:9.10px;color:#6e6e6e;">$3,000</span>
<span class="t" style="left:664.44px;top:624.40px;font-size:9.10px;color:#6e6e6e;">1</span>
<span class="t" style="left:769.22px;top:624.40px;font-size:9.10px;color:#6e6e6e;">$3,000.00</span>
<span class="t" style="left:882.45px;top:624.40px;font-size:9.10px;color:#6e6e6e;">$15,000.00</span>
<div class="r" style="left:813.60px;top:636.65px;width:126.70px;height:1.00px;background:#ececec;"></div>
<span class="t" style="left:13.94px;top:641.75px;font-size:9.10px;color:#b8b8b8;">5</span>
<span class="t" style="left:26.70px;top:641.62px;font-size:9.25px;color:#6e6e6e;">Co-Marketing OpEx Funds</span>
<span class="t" style="left:164.00px;top:641.62px;font-size:9.25px;color:#6e6e6e;transform:scaleX(0.9822);">TAMCO - New Mobile Monitoring Application Release - FULL-SERVICE</span>
<span class="t" style="left:569.37px;top:641.75px;font-size:9.10px;color:#6e6e6e;">$2,575</span>
<span class="t" style="left:654.32px;top:641.75px;font-size:9.10px;color:#6e6e6e;">226</span>
<span class="t" style="left:782.54px;top:641.75px;font-size:9.10px;color:#6e6e6e;">$11.39</span>
<span class="t" style="left:905.23px;top:641.75px;font-size:9.10px;color:#6e6e6e;">$0.00</span>
<div class="r" style="left:6.00px;top:654.50px;width:807.60px;height:17.35px;background:#f5f5f5;"></div>
<div class="r" style="left:813.60px;top:654.00px;width:126.70px;height:1.00px;background:#ececec;"></div>
<span class="t" style="left:13.94px;top:659.10px;font-size:9.10px;color:#b8b8b8;">6</span>
<span class="t" style="left:26.70px;top:658.97px;font-size:9.25px;color:#6e6e6e;">Late Q3 Carryover</span>
<span class="t" style="left:164.00px;top:658.97px;font-size:9.25px;color:#6e6e6e;transform:scaleX(0.9822);">TAMCO - New Mobile Monitoring Application Release - FULL-SERVICE</span>
<span class="t" style="left:569.37px;top:659.10px;font-size:9.10px;color:#6e6e6e;">$2,500</span>
<span class="t" style="left:654.32px;top:659.10px;font-size:9.10px;color:#6e6e6e;">168</span>
<span class="t" style="left:781.87px;top:659.10px;font-size:9.10px;color:#6e6e6e;">$14.88</span>
<span class="t" style="left:905.23px;top:659.10px;font-size:9.10px;color:#6e6e6e;">$0.00</span>
<div class="r" style="left:813.60px;top:671.35px;width:126.70px;height:1.00px;background:#ececec;"></div>
<span class="t" style="left:13.94px;top:676.45px;font-size:9.10px;color:#b8b8b8;">7</span>
<span class="t" style="left:26.70px;top:676.32px;font-size:9.25px;color:#6e6e6e;">Q3 Allocation in advance</span>
<span class="t" style="left:164.00px;top:676.32px;font-size:9.25px;color:#6e6e6e;transform:scaleX(0.9822);">TAMCO - New Mobile Monitoring Application Release - FULL-SERVICE</span>
<span class="t" style="left:569.37px;top:676.45px;font-size:9.10px;color:#6e6e6e;">$2,425</span>
<span class="t" style="left:659.38px;top:676.45px;font-size:9.10px;color:#6e6e6e;">15</span>
<span class="t" style="left:776.80px;top:676.45px;font-size:9.10px;color:#6e6e6e;">$161.67</span>
<span class="t" style="left:882.45px;top:676.45px;font-size:9.10px;color:#6e6e6e;">$50,000.00</span>
<div class="r" style="left:6.00px;top:689.20px;width:807.60px;height:17.35px;background:#f5f5f5;"></div>
<div class="r" style="left:813.60px;top:688.70px;width:126.70px;height:1.00px;background:#ececec;"></div>
<span class="t" style="left:13.94px;top:693.80px;font-size:9.10px;color:#b8b8b8;">8</span>
<span class="t" style="left:26.70px;top:693.67px;font-size:9.25px;color:#6e6e6e;">Q2 Second Distribution</span>
<span class="t" style="left:164.00px;top:693.67px;font-size:9.25px;color:#6e6e6e;transform:scaleX(0.9822);">TAMCO - New Mobile Monitoring Application Release - FULL-SERVICE</span>
<span class="t" style="left:569.37px;top:693.80px;font-size:9.10px;color:#6e6e6e;">$1,155</span>
<span class="t" style="left:664.44px;top:693.80px;font-size:9.10px;color:#6e6e6e;">6</span>
<span class="t" style="left:776.80px;top:693.80px;font-size:9.10px;color:#6e6e6e;">$192.50</span>
<span class="t" style="left:905.23px;top:693.80px;font-size:9.10px;color:#6e6e6e;">$0.00</span>
<div class="r" style="left:813.60px;top:706.05px;width:126.70px;height:1.00px;background:#ececec;"></div>
<span class="t" style="left:13.94px;top:711.15px;font-size:9.10px;color:#b8b8b8;">9</span>
<span class="t" style="left:26.70px;top:711.02px;font-size:9.25px;color:#6e6e6e;">Q2 Allocation</span>
<span class="t" style="left:164.00px;top:711.02px;font-size:9.25px;color:#6e6e6e;transform:scaleX(0.9822);">TAMCO - New Mobile Monitoring Application Release - FULL-SERVICE</span>
<span class="t" style="left:569.37px;top:711.15px;font-size:9.10px;color:#6e6e6e;">$1,155</span>
<span class="t" style="left:664.44px;top:711.15px;font-size:9.10px;color:#6e6e6e;">3</span>
<span class="t" style="left:776.80px;top:711.15px;font-size:9.10px;color:#6e6e6e;">$385.00</span>
<span class="t" style="left:905.23px;top:711.15px;font-size:9.10px;color:#6e6e6e;">$0.00</span>
<div class="r" style="left:6.00px;top:723.90px;width:807.60px;height:17.35px;background:#f5f5f5;"></div>
<div class="r" style="left:813.60px;top:723.40px;width:126.70px;height:1.00px;background:#ececec;"></div>
<span class="t" style="left:8.88px;top:728.50px;font-size:9.10px;color:#b8b8b8;">10</span>
<span class="t" style="left:26.70px;top:728.37px;font-size:9.25px;color:#6e6e6e;">Contra</span>
<span class="t" style="left:164.00px;top:728.37px;font-size:9.25px;color:#6e6e6e;">(Demo) Seminar Event Campaign</span>
<span class="t" style="left:569.37px;top:728.50px;font-size:9.10px;color:#6e6e6e;">$1,000</span>
<span class="t" style="left:664.44px;top:728.50px;font-size:9.10px;color:#6e6e6e;">4</span>
<span class="t" style="left:776.80px;top:728.50px;font-size:9.10px;color:#6e6e6e;">$250.00</span>
<div class="r" style="left:813.60px;top:723.90px;width:126.70px;height:17.35px;background:#0b8993;"></div>
<span class="t" style="left:868.00px;top:728.50px;font-size:9.10px;color:#ffffff;font-weight:bold;transform:scaleX(1.0310);">$1,160,000.00</span>
<div class="r" style="left:813.60px;top:740.75px;width:126.70px;height:1.00px;background:#ececec;"></div>
<span class="t" style="left:9.55px;top:745.85px;font-size:9.10px;color:#b8b8b8;">11</span>
<span class="t" style="left:26.70px;top:745.72px;font-size:9.25px;color:#6e6e6e;">2016 Accrual</span>
<span class="t" style="left:164.00px;top:745.72px;font-size:9.25px;color:#6e6e6e;transform:scaleX(0.9822);">TAMCO - New Mobile Monitoring Application Release - FULL-SERVICE</span>
<span class="t" style="left:576.96px;top:745.85px;font-size:9.10px;color:#6e6e6e;">$500</span>
<span class="t" style="left:664.44px;top:745.85px;font-size:9.10px;color:#6e6e6e;">1</span>
<span class="t" style="left:776.80px;top:745.85px;font-size:9.10px;color:#6e6e6e;">$500.00</span>
<span class="t" style="left:905.23px;top:745.85px;font-size:9.10px;color:#6e6e6e;">$0.00</span>
<div class="r" style="left:6.00px;top:758.60px;width:807.60px;height:17.35px;background:#f5f5f5;"></div>
<div class="r" style="left:813.60px;top:758.10px;width:126.70px;height:1.00px;background:#ececec;"></div>
<span class="t" style="left:8.88px;top:763.20px;font-size:9.10px;color:#b8b8b8;">12</span>
<span class="t" style="left:26.70px;top:763.07px;font-size:9.25px;color:#6e6e6e;">Tamco 2018 Q3-Q4</span>
<span class="t" style="left:164.00px;top:763.07px;font-size:9.25px;color:#6e6e6e;">(Demo) Seminar Event Campaign</span>
<span class="t" style="left:576.96px;top:763.20px;font-size:9.10px;color:#6e6e6e;">$500</span>
<span class="t" style="left:659.38px;top:763.20px;font-size:9.10px;color:#6e6e6e;">98</span>
<span class="t" style="left:786.93px;top:763.20px;font-size:9.10px;color:#6e6e6e;">$5.10</span>
<span class="t" style="left:905.23px;top:763.20px;font-size:9.10px;color:#6e6e6e;">$0.00</span>
<div class="r" style="left:813.60px;top:775.45px;width:126.70px;height:1.00px;background:#ececec;"></div>
<div class="r" style="left:21.90px;top:550.00px;width:1.00px;height:225.95px;background:#dedede;"></div>
<div class="r" style="left:159.70px;top:550.00px;width:1.00px;height:225.95px;background:#dedede;"></div>
<div class="r" style="left:506.10px;top:550.00px;width:1.00px;height:225.95px;background:#dedede;"></div>
<div class="r" style="left:600.20px;top:550.00px;width:1.00px;height:225.95px;background:#dedede;"></div>
<div class="r" style="left:673.10px;top:550.00px;width:1.00px;height:225.95px;background:#dedede;"></div>
<div class="r" style="left:813.10px;top:550.00px;width:1.00px;height:225.95px;background:#dedede;"></div>
<div class="r" style="left:6.00px;top:566.60px;width:934.30px;height:1.60px;background:#c9ccd0;"></div>
<span class="t" style="left:26.70px;top:554.90px;font-size:9.10px;color:#666666;font-weight:bold;transform:scaleX(1.0495);">Fund Name</span>
<span class="t" style="left:164.00px;top:554.90px;font-size:9.10px;color:#666666;font-weight:bold;transform:scaleX(1.0378);">Campaign Name</span>
<span class="t" style="left:511.00px;top:554.90px;font-size:9.10px;color:#666666;font-weight:bold;transform:scaleX(1.0100);">MDF Funding</span>
<svg class="r" style="left:572px;top:553px" width="12" height="10" viewBox="0 0 12 10"><path d="M1.5 2.5l4 4 4-4" fill="none" stroke="#888" stroke-width="0.9"/></svg>
<span class="t" style="left:604.80px;top:554.90px;font-size:9.10px;color:#666666;font-weight:bold;transform:scaleX(0.9890);">MQLs</span>
<span class="t" style="left:677.80px;top:554.90px;font-size:9.10px;color:#666666;font-weight:bold;transform:scaleX(1.0091);">Lead Acquisition Cost</span>
<span class="t" style="left:817.60px;top:554.90px;font-size:9.10px;color:#666666;font-weight:bold;transform:scaleX(1.0433);">Generated Pipeline</span>
<span class="t" style="left:1132.50px;top:523.06px;font-size:18.00px;color:#9e9e9e;transform:scaleX(0.9106);-webkit-text-stroke:0.45px #fff;">Campaign to Conversions</span>
<span class="t" style="left:1291.70px;top:564.01px;font-size:10.50px;color:#666666;transform:scaleX(0.9570);">Lead Conversions</span>
<svg class="r" style="left:0;top:0" width="1536" height="858" viewBox="0 0 1536 858"><rect x="1227.50" y="597" width="1" height="259" fill="#e6e6e6"/><rect x="1290.20" y="597" width="1" height="259" fill="#e6e6e6"/><rect x="1353.00" y="597" width="1" height="259" fill="#e6e6e6"/><rect x="1415.80" y="597" width="1" height="259" fill="#e6e6e6"/><rect x="1478.50" y="597" width="1" height="259" fill="#e6e6e6"/><rect x="1164.5" y="597" width="1" height="259" fill="#ccd6eb"/><rect x="1165" y="604.1" width="331.5" height="48" fill="#008fd6"/><rect x="1165" y="652.1" width="331.5" height="48.5" fill="#e8684a"/><rect x="1165" y="711.6" width="127.9" height="48.7" fill="#008fd6"/><rect x="1165" y="760.3" width="17.1" height="48.7" fill="#e8684a"/><rect x="1165" y="820" width="1.6" height="36" fill="#008fd6"/></svg>
<span class="t" style="left:1162.22px;top:577.83px;font-size:10.00px;color:#666666;">0</span>
<span class="t" style="left:1222.44px;top:577.83px;font-size:10.00px;color:#666666;">50</span>
<span class="t" style="left:1282.36px;top:577.83px;font-size:10.00px;color:#666666;">100</span>
<span class="t" style="left:1345.16px;top:577.83px;font-size:10.00px;color:#666666;">150</span>
<span class="t" style="left:1407.96px;top:577.83px;font-size:10.00px;color:#666666;">200</span>
<span class="t" style="left:1470.66px;top:577.83px;font-size:10.00px;color:#666666;">250</span>
<span class="t" style="left:975.30px;top:640.21px;font-size:10.50px;color:#666666;transform:scaleX(0.9820);">TAMCO - New Mobile Monitoring</span>
<span class="t" style="left:975.30px;top:654.01px;font-size:10.50px;color:#666666;transform:scaleX(0.9085);">Application Release - FULL-SERVICE</span>
<span class="t" style="left:1000.80px;top:755.41px;font-size:10.50px;color:#666666;transform:scaleX(0.9628);">(Demo) Seminar Event Campaign</span>
<div class="r" style="left:968px;top:760px;width:0;height:0"><div style="position:absolute;left:0;top:0;transform:rotate(-90deg);transform-origin:0 0"><span class="t" style="left:-39.00px;top:-8.89px;font-size:10.50px;color:#666666;transform:scaleX(0.9900);">Campaign Name</span></div></div>
<div class="r" style="left:1509.00px;top:140.00px;width:13.50px;height:716.00px;background:#f1f1f1;"></div>
<div class="r" style="left:1510.30px;top:154.00px;width:10.60px;height:225.00px;background:#c1c1c1;"></div>
<svg class="r" style="left:1509px;top:140px" width="14" height="716" viewBox="0 0 14 716"><path d="M3.8 10h6l-3-4z" fill="#a3a3a3"/><path d="M3.8 705.5h6l-3 4z" fill="#505050"/></svg>
<div class="r" style="left:1522.50px;top:50.00px;width:10.50px;height:808.00px;background:linear-gradient(90deg,#ffffff,#f7f7f7 40%,#e9e9e9);"></div>
<div class="r" style="left:1533.00px;top:0.00px;width:3.00px;height:858.00px;background:#5f6b79;"></div>
</body></html>
